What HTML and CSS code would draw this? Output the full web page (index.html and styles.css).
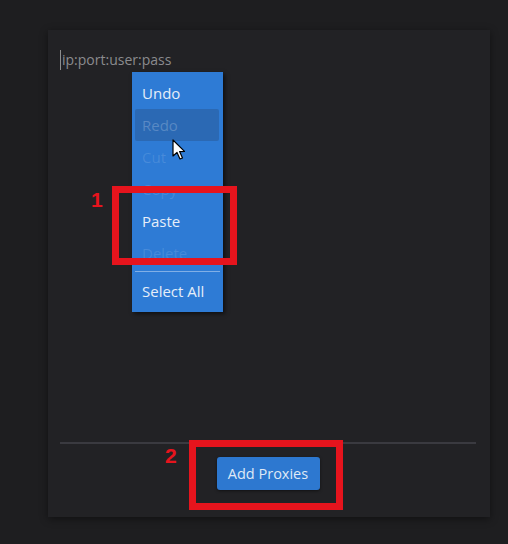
FILE: index.html
```html
<!DOCTYPE html>
<html lang="en">
<head>
<meta charset="utf-8">
<title>Add Proxies</title>
<link rel="stylesheet" href="styles.css">
</head>
<body>
<div class="page">
  <div class="card">
    <div class="input-area">
      <span class="caret"></span><span class="placeholder">ip:port:user:pass</span>
    </div>
    <div class="divider"></div>
    <div class="footer">
      <button class="btn">Add Proxies</button>
    </div>
  </div>

  <ul class="menu">
    <li class="item">Undo</li>
    <li class="item disabled hover">Redo</li>
    <li class="item disabled">Cut</li>
    <li class="item disabled">Copy</li>
    <li class="item">Paste</li>
    <li class="item disabled">Delete</li>
    <li class="sep"></li>
    <li class="item">Select All</li>
  </ul>

  <svg class="pointer" width="14" height="22" viewBox="0 0 14 22">
    <path d="M1 1 L1 17 L5 13.5 L8 20 L10.5 19 L7.6 12.6 L12.5 12.4 Z" fill="#ffffff" stroke="#000000" stroke-width="1.2" stroke-linejoin="round"/>
  </svg>

  <div class="mark mark-1"></div>
  <span class="num num-1">1</span>
  <div class="mark mark-2"></div>
  <span class="num num-2">2</span>
</div>
</body>
</html>
```

FILE: styles.css
```css
html, body {
  margin: 0;
  padding: 0;
  background: #1c1c1e;
}

.page {
  position: relative;
  width: 508px;
  height: 544px;
  overflow: hidden;
  background: #1e1e20;
  font-family: "Open Sans", "Noto Sans", sans-serif;
}

.card {
  margin: 30px 0 0 48px;
  width: 442px;
  height: 487px;
  box-sizing: border-box;
  padding: 0 14px 0 12px;
  background: #222225;
  box-shadow: 0 2px 8px rgba(0, 0, 0, 0.45);
  display: flex;
  flex-direction: column;
}

.input-area {
  flex: 0 0 auto;
  height: 412px;
  padding-top: 20px;
  box-sizing: border-box;
  display: flex;
  align-items: flex-start;
}

.caret {
  display: inline-block;
  width: 1px;
  height: 20px;
  background: #8d8d8d;
  margin-right: 1px;
}

.placeholder {
  font-size: 14px;
  line-height: 20px;
  color: #8b8b8e;
}

.divider {
  height: 2px;
  background: #3a3a40;
}

.footer {
  display: flex;
  justify-content: center;
  padding-top: 13px;
}

.btn {
  width: 103px;
  height: 33px;
  border: none;
  border-radius: 3px;
  background: #2d78d0;
  color: #dfe9f6;
  font-family: "Open Sans", "Noto Sans", sans-serif;
  font-size: 14.5px;
  padding: 0;
  box-shadow: 0 1px 3px rgba(0, 0, 0, 0.5);
}

.menu {
  position: absolute;
  left: 132px;
  top: 72px;
  width: 91px;
  margin: 0;
  padding: 5px 0;
  list-style: none;
  background: #2e7bd5;
  box-shadow: 2px 2px 4px rgba(0, 0, 0, 0.55);
}

.item {
  height: 32px;
  line-height: 32px;
  padding-left: 10px;
  font-size: 15px;
  color: #e6eef9;
  white-space: nowrap;
}

.item.disabled {
  color: rgba(255, 255, 255, 0.12);
}

.item.hover {
  margin: 0 4px 0 3px;
  padding-left: 7px;
  background: #2b69b4;
  border-radius: 2px;
  color: rgba(255, 255, 255, 0.22);
}

.sep {
  height: 1px;
  margin: 2px 3px 3px;
  background: rgba(255, 255, 255, 0.4);
}

.pointer {
  position: absolute;
  left: 172px;
  top: 139px;
}

.mark {
  position: absolute;
  box-sizing: border-box;
  border: 7px solid #e6141d;
}

.mark-1 {
  left: 112px;
  top: 186px;
  width: 125px;
  height: 79px;
}

.mark-2 {
  left: 189px;
  top: 440px;
  width: 154px;
  height: 70px;
}

.num {
  position: absolute;
  font-family: "Liberation Sans", Arial, sans-serif;
  font-weight: bold;
  font-size: 21px;
  line-height: 1;
  color: #e6141d;
}

.num-1 {
  left: 91px;
  top: 189px;
}

.num-2 {
  left: 165px;
  top: 445px;
}
```
